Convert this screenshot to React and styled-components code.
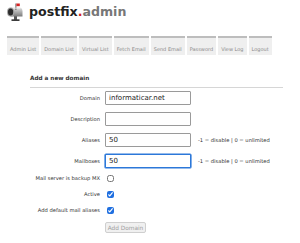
import React from 'react'
import styled, { createGlobalStyle } from 'styled-components'

const Global = createGlobalStyle`
  html, body { margin: 0; padding: 0; background: #fff; }
  body { font-family: "DejaVu Sans", Verdana, sans-serif; color: #333; }
`

const Page = styled.div`
  width: 300px;
  height: 243px;
  overflow: hidden;
`

const Header = styled.header`
  display: flex;
  align-items: center;
  gap: 6px;
  height: 17px;
  padding: 3px 0 0 6px;
`

const Brand = styled.div`
  font-weight: bold;
  font-size: 12.6px;
  line-height: 14px;
  color: #222;
  margin-top: 1px;
  span.dot { color: #d41f1f; }
  span.admin { color: #777; }
`

const Nav = styled.nav`
  display: flex;
  gap: 2px;
  margin: 16px 0 0 7px;
`

const Tab = styled.a`
  display: flex;
  align-items: flex-end;
  box-sizing: border-box;
  height: 19px;
  padding: 0 3px 3px;
  border-top: 2px solid #bdbdbd;
  background: #efefef;
  color: #8a8a8a;
  font-size: 5px;
  line-height: 6px;
  white-space: nowrap;
  text-decoration: none;
`

const Section = styled.section`
  margin: 19px 0 0 30px;
  width: 253px;
`

const Heading = styled.h3`
  margin: 0;
  font-size: 5.7px;
  line-height: 8px;
  font-weight: bold;
  color: #333;
  padding-bottom: 5px;
  border-bottom: 1px solid #d6d6d6;
`

const Form = styled.form`
  display: flex;
  flex-direction: column;
  margin-top: 3px;
`

const Row = styled.div`
  display: grid;
  grid-template-columns: 70px 86px 1fr;
  column-gap: 5px;
  align-items: center;
  height: ${p => p.$h}px;
  margin-bottom: ${p => p.$gap || 0}px;
`

const Label = styled.label`
  text-align: right;
  font-size: 5.2px;
  line-height: 6px;
  color: #333;
  white-space: nowrap;
`

const TextInput = styled.input`
  box-sizing: border-box;
  width: 86px;
  height: 14px;
  margin: 0;
  padding: 0 3px;
  font-family: "DejaVu Sans", Verdana, sans-serif;
  font-size: 7px;
  color: #222;
  background: #fff;
  border: 1px solid ${p => (p.$focused ? '#2c78d9' : '#9a9a9a')};
  box-shadow: ${p => (p.$focused ? '0 0 0 0.6px #2c78d9' : 'none')};
  border-radius: 1px;
  outline: none;
`

const Hint = styled.span`
  padding-left: 2px;
  font-size: 5.2px;
  line-height: 6px;
  color: #333;
  white-space: nowrap;
`

const Check = styled.input.attrs({ type: 'checkbox' })`
  width: 7px;
  height: 7px;
  margin: 0 0 0 2px;
  accent-color: #1f6fe0;
`

const Button = styled.button`
  margin: 4px 0 0 75px;
  width: 41px;
  height: 11px;
  padding: 0;
  font-family: "DejaVu Sans", Verdana, sans-serif;
  font-size: 5.8px;
  color: #a0a0a0;
  background: #f0f0f0;
  border: 1px solid #cfcfcf;
  border-radius: 2px;
`

// small mailbox with a red flag, as in the postfixadmin logo
const MailboxLogo = () => (
  <svg width="17" height="18" viewBox="0 0 17 18">
    <defs>
      <linearGradient id="bx" x1="0" y1="0" x2="0" y2="1">
        <stop offset="0" stopColor="#e2e2e2" />
        <stop offset="1" stopColor="#7a7a7a" />
      </linearGradient>
    </defs>
    <rect x="8" y="12" width="3" height="5" fill="#555" />
    <rect x="5.5" y="16.3" width="8" height="1.7" fill="#3c3c3c" />
    <path d="M4.5 4.5 H13 Q16.5 4.5 16.5 8.5 V13.5 H4.5 Z" fill="url(#bx)" />
    <ellipse cx="4.6" cy="9" rx="3.6" ry="4.5" fill="#a5a5a5" />
    <ellipse cx="4.6" cy="9" rx="2.6" ry="3.5" fill="#2b2b2b" />
    <rect x="9.4" y="0.5" width="1" height="6.5" fill="#666" />
    <path d="M10.4 0.5 H13.8 V3.2 H10.4 Z" fill="#d42424" />
    <path d="M7 5.2 H14.5" stroke="#f4f4f4" strokeWidth="0.7" />
  </svg>
)

const tabs = ['Admin List', 'Domain List', 'Virtual List', 'Fetch Email', 'Send Email', 'Password', 'View Log', 'Logout']

export default function App() {
  return (
    <Page>
      <Global />
      <Header>
        <MailboxLogo />
        <Brand>
          postfix<span className="dot">.</span><span className="admin">admin</span>
        </Brand>
      </Header>
      <Nav>
        {tabs.map(t => (
          <Tab key={t}>{t}</Tab>
        ))}
      </Nav>
      <Section>
        <Heading>Add a new domain</Heading>
        <Form onSubmit={e => e.preventDefault()}>
          <Row $h={14} $gap={7}>
            <Label>Domain</Label>
            <TextInput defaultValue="informaticar.net" />
          </Row>
          <Row $h={14} $gap={7}>
            <Label>Description</Label>
            <TextInput defaultValue="" />
          </Row>
          <Row $h={14} $gap={7}>
            <Label>Aliases</Label>
            <TextInput defaultValue="50" />
            <Hint>-1 = disable | 0 = unlimited</Hint>
          </Row>
          <Row $h={14} $gap={2}>
            <Label>Mailboxes</Label>
            <TextInput defaultValue="50" $focused />
            <Hint>-1 = disable | 0 = unlimited</Hint>
          </Row>
          <Row $h={16}>
            <Label>Mail server is backup MX</Label>
            <Check />
          </Row>
          <Row $h={16}>
            <Label>Active</Label>
            <Check defaultChecked />
          </Row>
          <Row $h={16}>
            <Label>Add default mail aliases</Label>
            <Check defaultChecked />
          </Row>
          <Button type="button">Add Domain</Button>
        </Form>
      </Section>
    </Page>
  )
}
